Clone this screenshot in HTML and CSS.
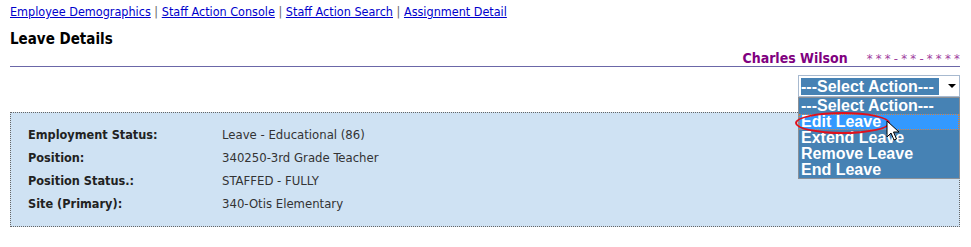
FILE: index.html
```html
<!DOCTYPE html>
<html lang="en">
<head>
    <meta charset="UTF-8">
    <title>Leave Details</title>
    <link rel="stylesheet" href="styles.css">
</head>
<body>
    <div class="nav">
        <a href="#">Employee Demographics</a> <span class="sep">|</span>
        <a href="#">Staff Action Console</a> <span class="sep">|</span>
        <a href="#">Staff Action Search</a> <span class="sep">|</span>
        <a href="#">Assignment Detail</a>
    </div>

    <h2 class="title">Leave Details</h2>

    <div class="name-row">
        <span class="emp-name">Charles Wilson</span>
        <span class="ssn">***-**-****</span>
    </div>

    <div class="action-row">
        <div class="action-select">
            <div class="select-box">
                <span class="select-value">---Select Action---</span>
                <span class="select-arrow"></span>
            </div>
            <ul class="select-list">
                <li>---Select Action---</li>
                <li class="active">Edit Leave</li>
                <li>Extend Leave</li>
                <li>Remove Leave</li>
                <li>End Leave</li>
            </ul>
            <div class="callout"></div>
            <svg class="cursor" width="14" height="22" viewBox="0 0 14 22">
                <path d="M1 1 L1 17 L5 13 L8 20 L10.5 19 L7.5 12 L13 12 Z" fill="#fff" stroke="#000" stroke-width="1" stroke-linejoin="round"/>
            </svg>
        </div>
    </div>

    <div class="panel">
        <div class="label">Employment Status:</div>
        <div class="value">Leave - Educational (86)</div>
        <div class="label">Position:</div>
        <div class="value">340250-3rd Grade Teacher</div>
        <div class="label">Position Status.:</div>
        <div class="value">STAFFED - FULLY</div>
        <div class="label">Site (Primary):</div>
        <div class="value">340-Otis Elementary</div>
    </div>
</body>
</html>
```

FILE: styles.css
```css
body {
    margin: 0;
    padding: 0 11px 0 10px;
    font-family: "DejaVu Sans Condensed", "DejaVu Sans", sans-serif;
    font-size: 13px;
    color: #222;
    background: #fff;
}
.nav {
    padding-top: 4px;
    height: 17px;
    font-size: 12.5px;
}
.nav a {
    color: #0000cc;
}
.sep {
    color: #666;
}
.title {
    margin: 9px 0 0 0;
    font-size: 15px;
    font-weight: bold;
    color: #000;
    height: 20px;
}
.name-row {
    display: flex;
    justify-content: flex-end;
    align-items: baseline;
    gap: 19px;
    height: 15px;
    padding-bottom: 1px;
    border-bottom: 1px solid #6b67a8;
}
.emp-name {
    color: #800080;
    font-weight: bold;
    font-size: 14px;
}
.ssn {
    color: #a040a0;
    font-size: 13px;
    letter-spacing: 3.2px;
    margin-right: -3px;
}
.action-row {
    display: flex;
    justify-content: flex-end;
    padding-top: 8px;
    height: 37px;
}
.action-select {
    position: relative;
    width: 162px;
}
.select-box {
    height: 20px;
    border: 1px solid #a7b9cf;
    display: flex;
    align-items: center;
    padding: 0 2px;
    font-family: "Liberation Sans", Arial, sans-serif;
    font-weight: bold;
    font-size: 16px;
}
.select-value {
    background: #4682b4;
    color: #fff;
    width: 138px;
    line-height: 17px;
    white-space: nowrap;
}
.select-arrow {
    margin-left: 9px;
    width: 0;
    height: 0;
    border-left: 4px solid transparent;
    border-right: 4px solid transparent;
    border-top: 4px solid #000;
}
.select-list {
    position: absolute;
    top: 22px;
    left: 0;
    width: 160px;
    margin: 0;
    padding: 0;
    list-style: none;
    background: #4682b4;
    border: 1px solid #8a8f96;
    font-family: "Liberation Sans", Arial, sans-serif;
    font-weight: bold;
    font-size: 16px;
    color: #fff;
    z-index: 2;
}
.select-list li {
    height: 16px;
    line-height: 16px;
    padding-left: 2px;
    white-space: nowrap;
}
.select-list li.active {
    background: #3399ff;
    outline: 1px dotted #d08040;
    outline-offset: -1px;
}
.callout {
    position: absolute;
    left: -3px;
    top: 37px;
    width: 91px;
    height: 18px;
    border: 2px solid #e0101c;
    border-radius: 50%;
    z-index: 3;
}
.cursor {
    position: absolute;
    left: 88px;
    top: 45px;
    z-index: 4;
}
.panel {
    background: #cfe2f3;
    border: 1px dotted #666;
    display: grid;
    grid-template-columns: 194px 1fr;
    row-gap: 5px;
    padding: 13px 17px 13px 17px;
}
.label {
    font-weight: bold;
    font-size: 12.6px;
    color: #222;
    line-height: 18px;
}
.value {
    font-size: 13px;
    color: #333;
    line-height: 18px;
}
```
